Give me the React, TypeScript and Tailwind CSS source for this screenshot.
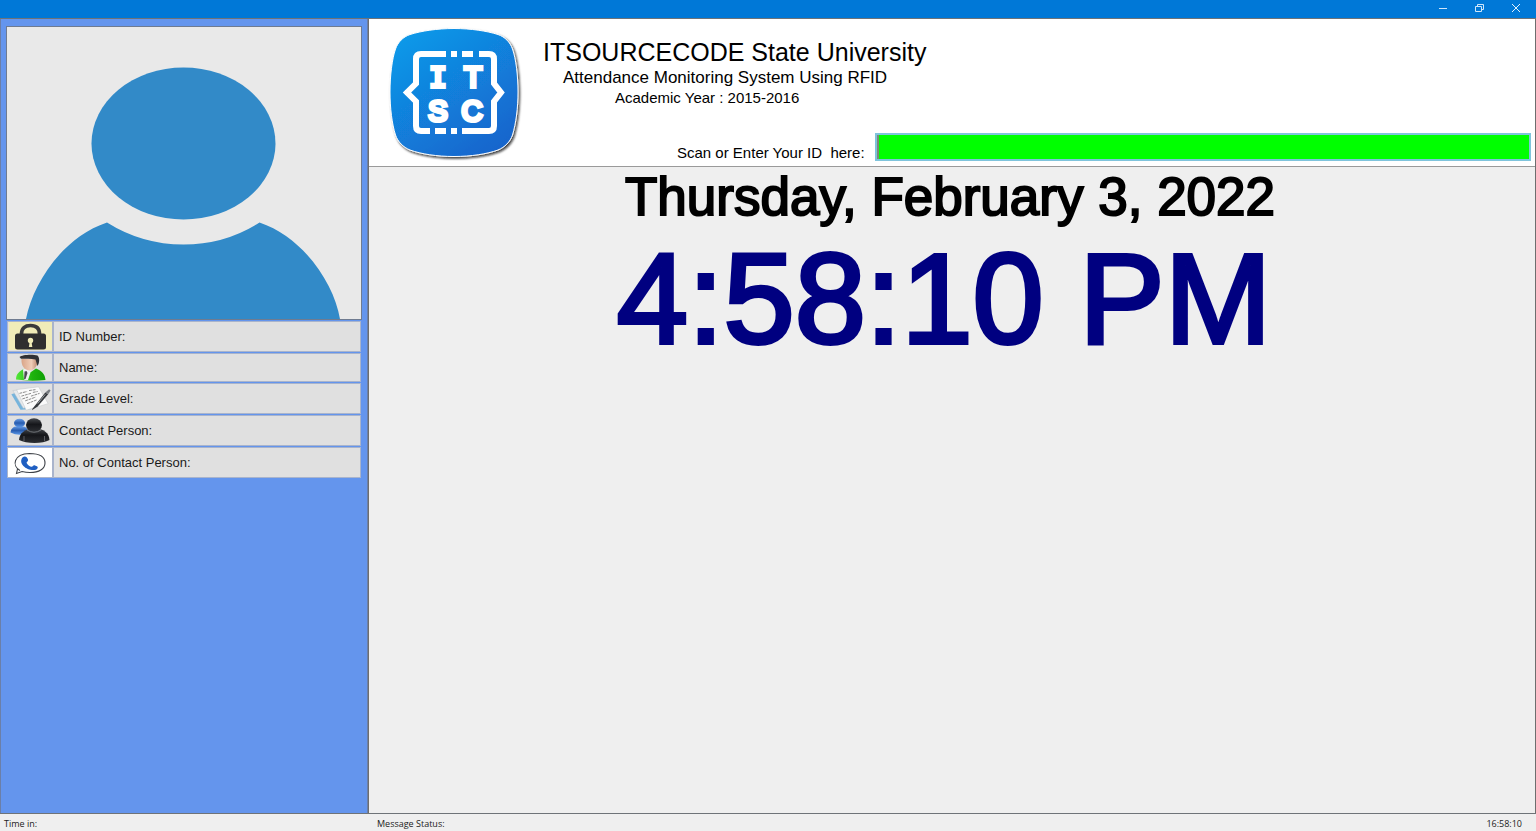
import React, { useState } from 'react';

function LockIcon() {
  return (
    <svg viewBox="0 0 44 29" className="w-full h-full" preserveAspectRatio="none" aria-hidden="true">
      <rect x="1" y="0" width="43" height="28" fill="#f0ecb8" />
      <path d="M13.500 12C13.500 6 17 3.500 22.500 3.500S31.500 6 31.500 12" fill="none" stroke="#3a3a3a" strokeWidth="3.6" />
      <rect x="7" y="11.500" width="31" height="16" rx="2.500" fill="#2f2f2f" />
      <circle cx="22.500" cy="18.500" r="2.700" fill="#f0ecb8" />
      <path d="M21.700 19h1.800l.8 6h-3.400z" fill="#f0ecb8" />
    </svg>
  );
}

function PersonIcon() {
  return (
    <svg viewBox="0 0 44 27" className="w-full h-full" preserveAspectRatio="none" aria-hidden="true">
      <defs>
        <linearGradient id="shirt" x1="0" y1="0" x2="1" y2="0">
          <stop offset="0" stopColor="#55e83a" />
          <stop offset="0.55" stopColor="#1fb30e" />
          <stop offset="1" stopColor="#0fa005" />
        </linearGradient>
        <linearGradient id="skin" x1="0" y1="0" x2="1" y2="0">
          <stop offset="0" stopColor="#d9a487" />
          <stop offset="0.6" stopColor="#f0cdb8" />
          <stop offset="1" stopColor="#b88168" />
        </linearGradient>
      </defs>
      <path d="M8 25.500C8 20 11 17 17 14.500L23 18 28 14.500C34 17 37 20 37.500 26Q22 27.500 8 25.500Z" fill="url(#shirt)" />
      <path d="M15 15.500L17.500 14 23 17 20 26H16Z" fill="#eef0f2" />
      <path d="M16.500 17.500L18.500 17 19.500 19 17.500 25 16 25.500Z" fill="#4a4a50" />
      <path d="M13.500 5C13 11 16 16 21 16.500 27 16.500 30 11 30 5Z" fill="url(#skin)" />
      <path d="M11.500 3C14 .5 25 0 29.500 1.500 32 4 31.500 9 29.500 12L27.500 5.500C22 4 17 5 13 4.800Z" fill="#303034" />
    </svg>
  );
}

function PaperIcon() {
  return (
    <svg viewBox="0 0 46 31" className="w-full h-full" preserveAspectRatio="none" aria-hidden="true">
      <path d="M3.500 11L12 8 24 27 13 27.500Z" fill="#76b4dc" />
      <path d="M5 7L29 4 35 18 16 26Z" fill="#e6e9ec" stroke="#bcc2c8" strokeWidth=".5" />
      <path d="M9 6L32 3 42 21 19 28Z" fill="#fafafa" stroke="#c5c8ca" strokeWidth=".6" />
      <path d="M12 10l8-2M22 7l7-1M14 13l10-3M26 9l5-1M15 16l6-2M24 13l9-3M18 18l11-4M20 21l10-4" stroke="#858585" strokeWidth="1" strokeDasharray="3 .8" />
      <path d="M26 26L39 9 42 11 31 24 25 28Z" fill="#35383c" />
      <path d="M39 9L43 5.500 44.500 7 42 11Z" fill="#777b80" />
      <path d="M31 21L39 11" stroke="#9da2a6" strokeWidth="1" />
    </svg>
  );
}

function PeopleIcon() {
  return (
    <svg viewBox="0 0 44 29" className="w-full h-full" preserveAspectRatio="none" aria-hidden="true">
      <defs>
        <linearGradient id="blueMan" x1="0" y1="0" x2="0" y2="1">
          <stop offset="0" stopColor="#6ea2ea" />
          <stop offset=".5" stopColor="#285cae" />
          <stop offset="1" stopColor="#5c98e8" />
        </linearGradient>
        <linearGradient id="blackMan" x1="0" y1="0" x2="0" y2="1">
          <stop offset="0" stopColor="#45484c" />
          <stop offset=".45" stopColor="#15161a" />
          <stop offset="1" stopColor="#2c2e32" />
        </linearGradient>
      </defs>
      <path d="M2.500 16.500C3 12 6 10 11.500 10S20 12 20.500 16.500Q11.500 21 2.500 16.500Z" fill="url(#blueMan)" />
      <ellipse cx="11.500" cy="7" rx="5.500" ry="4.300" fill="url(#blueMan)" />
      <path d="M11 24C11.500 17 17 12.500 26.500 12.500S41 17 41.500 24Q36 27 26.500 27T11 24Z" fill="url(#blackMan)" />
      <ellipse cx="26" cy="9" rx="8" ry="6.800" fill="url(#blackMan)" />
      <path d="M19 14Q26 18.500 33 14" fill="none" stroke="#7e8186" strokeWidth=".8" />
      <path d="M16 20V25M36.500 20V25" stroke="#777a80" strokeWidth=".7" />
    </svg>
  );
}

function PhoneIcon() {
  return (
    <svg viewBox="0 0 44 29" className="w-full h-full" preserveAspectRatio="none" aria-hidden="true">
      <rect width="44" height="29" fill="#fff" />
      <path d="M12 22.500C4 18 5 6 21.500 5.500 33 5.500 37 10 37 15 37 21 31 24.500 22 24.500 18 24.500 16 24 14 23.500L8.500 25.500 9.500 21" fill="#fff" stroke="#3e4248" strokeWidth="1.100" />
      <path d="M14.500 9.500C17 7.500 19 9 20 11.500 20.500 13.500 18 14 18.800 15.200 20 17.500 22 18.500 23.500 18.800 25 19 25 16.800 27 17.500 30.500 18.500 30.500 20 28 21.800 20 23.800 9.500 16 14.500 9.500Z" fill="#1f5fc2" />
    </svg>
  );
}

function Logo() {
  return (
    <svg viewBox="0 0 140 140" className="w-[140px] h-[140px] shrink-0" role="img" aria-label="ITSC logo">
      <defs>
        <linearGradient id="badge" x1=".1" y1="0" x2=".8" y2="1">
          <stop offset="0" stopColor="#0f9bea" />
          <stop offset="1" stopColor="#1464cc" />
        </linearGradient>
        <filter id="badgeShadow" x="-10%" y="-10%" width="120%" height="120%">
          <feDropShadow dx="1.500" dy="1.800" stdDeviation=".8" floodColor="#111" floodOpacity=".8" />
        </filter>
      </defs>
      <path
        d="M69 3.500C86 3.500 102 6 113 9.500 120 12 125 17 127.500 24 131 34 133 51 133 67S131 98 127.500 110C125 117 120 122 113 125 102 129 86 131.500 69 131.500S36 129 25 125C18 122 13 117 10.500 110 7 99 5 83 5 67S7 34 10.500 24C13 17 18 12 25 9.500 36 6 52 3.500 69 3.500Z"
        fill="url(#badge)"
        stroke="#fff"
        strokeWidth="1"
        filter="url(#badgeShadow)"
      />
      <g fill="none" stroke="#fff" strokeWidth="6">
        <path d="M61 29H36Q31 29 31 34V58.500L22 67.500 31 76.500V101Q31 106 36 106H45" />
        <path d="M94 29H104Q109 29 109 34V58.500L116 67.500 109 76.500V101Q109 106 104 106H77" />
        <path d="M66 29H72M77 29H88M50 106H61M66 106H72" />
      </g>
      <g fill="#fff" stroke="#fff" fontSize="29" strokeWidth="4" textAnchor="middle">
        <text x="53" y="62" fontFamily="Liberation Mono">I</text>
        <text x="88" y="62" fontFamily="Liberation Sans">T</text>
        <text x="53" y="96" fontFamily="Liberation Sans">S</text>
        <text x="87" y="96" fontFamily="Liberation Sans">C</text>
      </g>
    </svg>
  );
}

const fields = [
  { label: 'ID Number:', icon: <LockIcon />, height: 'h-[31px]' },
  { label: 'Name:', icon: <PersonIcon />, height: 'h-[29px]' },
  { label: 'Grade Level:', icon: <PaperIcon />, height: 'h-[31px]' },
  { label: 'Contact Person:', icon: <PeopleIcon />, height: 'h-[31px]' },
  { label: 'No. of Contact Person:', icon: <PhoneIcon />, height: 'h-[31px]' },
];

export default function App() {
  const [cardId, setCardId] = useState('');

  return (
    <div className="min-h-screen flex flex-col bg-[#efefef] text-black font-['Liberation_Sans',Arial,sans-serif]">
      <div className="h-[18px] bg-[#0078d7] flex justify-end pr-0.5 pb-0.5">
        <button type="button" aria-label="Minimize" className="w-9 flex items-center justify-center">
          <svg viewBox="0 0 10 10" className="w-2.5 h-2.5" stroke="#cfe6fa" fill="none">
            <path d="M0 5.500H8" />
          </svg>
        </button>
        <button type="button" aria-label="Restore" className="w-9 flex items-center justify-center">
          <svg viewBox="0 0 10 10" className="w-2.5 h-2.5" stroke="#cfe6fa" fill="none">
            <path d="M.5 3.500H6.500V8.500H.5ZM2.500 3.500V1.500H8.500V6.500H6.500" />
          </svg>
        </button>
        <button type="button" aria-label="Close" className="w-9 flex items-center justify-center">
          <svg viewBox="0 0 10 10" className="w-2.5 h-2.5" stroke="#e4f1fc" fill="none">
            <path d="M1 1L9 9M9 1L1 9" />
          </svg>
        </button>
      </div>

      <div className="flex-1 flex border-y border-[#6e7378]">
        <aside className="w-[368px] shrink-0 bg-[#6495ed] border-x border-[#6b7fa8] px-[5px] pt-[7px]">
          <svg viewBox="0 0 354 292" className="w-full h-[294px] border border-[#6f7b90] bg-[#e9e9e9]" preserveAspectRatio="none" role="img" aria-label="Student photo">
            <ellipse cx="176.500" cy="116.500" rx="92" ry="76" fill="#328ac8" />
            <path d="M19 292C26 256 56 210 100 195.500Q135 217.500 176.500 217.500T252.500 195.500C296 210 327 256 333 292Z" fill="#328ac8" />
          </svg>

          <dl className="mt-px px-px flex flex-col gap-px">
            {fields.map((f) => (
              <div key={f.label} className={`flex ${f.height}`}>
                <dd className="w-[46px] shrink-0 border border-[#a9b4cc] bg-[#e0e0e0]">{f.icon}</dd>
                <dt className="flex-1 flex items-center pl-[5px] border border-[#a9b4cc] bg-[#e0e0e0] text-[13px] text-[#1a1a1a]">{f.label}</dt>
              </div>
            ))}
          </dl>
        </aside>

        <main className="flex-1 border-x border-[#6e6e6e]">
          <header className="flex h-[148px] bg-white border-b border-[#9a9a9a] pl-4 pr-1 pt-1.5">
            <Logo />
            <div className="flex-1 flex flex-col pl-[18px] pb-[5px]">
              <h1 className="pt-[11px] text-[25px] leading-8">ITSOURCECODE State University</h1>
              <p className="pl-5 text-[17px] leading-5">Attendance Monitoring System Using RFID</p>
              <p className="pl-[72px] text-[15px] leading-5">Academic Year : 2015-2016</p>
              <form className="mt-auto flex items-end pl-[134px]" onSubmit={(e) => e.preventDefault()}>
                <label htmlFor="card-id" className="text-[15px] leading-4 pr-2.5 whitespace-pre">Scan or Enter Your ID  here:</label>
                <input
                  id="card-id"
                  type="text"
                  autoComplete="off"
                  className="flex-1 h-7 bg-[#00ff00] border-2 border-[#7fc4dc] px-1 outline-none shadow-[inset_2px_0_0_#7a8a78]"
                  value={cardId}
                  onChange={(e) => setCardId(e.target.value)}
                />
              </form>
            </div>
          </header>

          <section className="flex flex-col items-center text-center">
            <p className="pr-1 text-[53px] leading-[60px] [-webkit-text-stroke:2px_black]">Thursday, February 3, 2022</p>
            <p className="pr-4 text-[128px] leading-[144px] text-[#000080] [-webkit-text-stroke:4px_#000080]">4:58:10 PM</p>
          </section>
        </main>
      </div>

      <footer className="h-[17px] pt-0.5 flex items-center text-[9px] leading-4 text-[#222] font-['Open_Sans',sans-serif]">
        <span className="w-[377px] pl-1">Time in:</span>
        <span className="flex-1">Message Status:</span>
        <span className="pr-3.5">16:58:10</span>
      </footer>
    </div>
  );
}
